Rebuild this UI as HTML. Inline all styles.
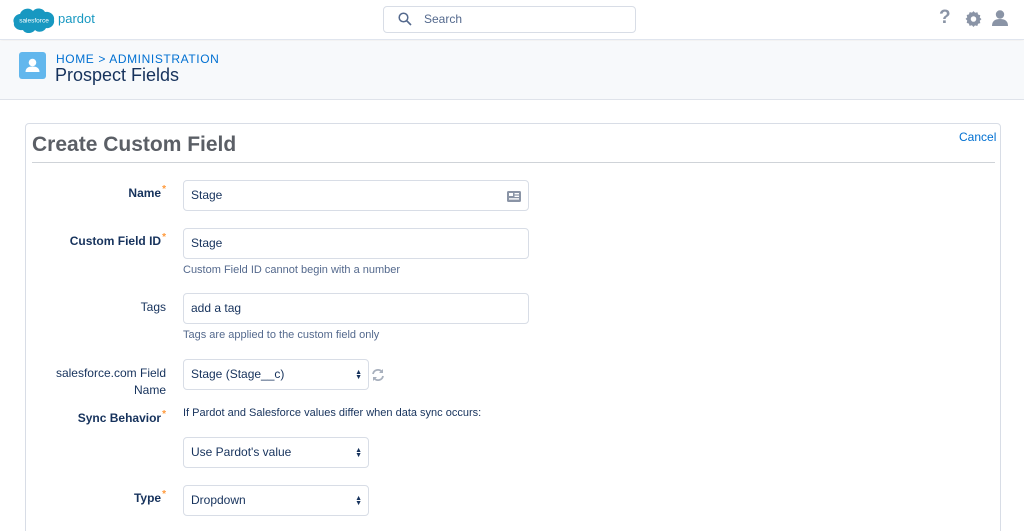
<!DOCTYPE html>
<html style="width:1024px;height:531px;overflow:hidden"><head><meta charset="utf-8"><style>
*{box-sizing:border-box;margin:0;padding:0}
body{width:1024px;height:531px;overflow:hidden;background:#fff;font-family:"Liberation Sans",sans-serif;color:#16325c;position:relative}
.a{position:absolute}
.top{left:0;top:0;width:1024px;height:40px;background:#fff;border-bottom:1px solid #e0e5ee;box-shadow:0 2px 3px rgba(0,0,0,.06)}
.ph{left:0;top:41px;width:1024px;height:59px;background:#f7f9fb;border-bottom:1px solid #dfe3ea}
.card{left:25px;top:123px;width:976px;height:420px;border:1px solid #d8dde6;border-radius:4px;background:#fff}
.lbl{font-size:12px;text-align:right;width:160px;left:6px;color:#16325c}
.b{font-weight:bold}
.st{color:#ff9a3c;font-size:10px;position:relative;top:-5px;margin-left:1px}
.in{left:183px;height:31px;border:1px solid #d8dde6;border-radius:4px;font-size:12px;padding:0 7px;line-height:29px;color:#16325c}
.help{left:183px;font-size:11px;color:#54698d}
.arr{position:absolute;right:6px;top:10px;font-size:7px;line-height:5px;color:#16325c}
</style></head><body>
<div class="a top"></div>
<svg class="a" style="left:12px;top:5px" width="44" height="30" viewBox="0 0 44 30"><path d="M8 9c2-6 10-7 13-3 3-4 10-3 12 1 5-1 10 3 9 8 1 5-4 9-8 8-2 4-8 5-11 2-3 4-10 4-12 0-5 1-10-3-9-7-2-4 2-9 6-9z" fill="#1798c1"/><text x="22" y="17.5" font-size="6.5" fill="#fff" text-anchor="middle" font-family="Liberation Sans">salesforce</text></svg>
<div class="a" style="left:58px;top:11px;font-size:13px;color:#1798c1">pardot</div>
<div class="a" style="left:383px;top:6px;width:253px;height:27px;border:1px solid #d8dde6;border-radius:4px"></div>
<svg class="a" style="left:398px;top:12px" width="14" height="14" viewBox="0 0 14 14"><circle cx="5.5" cy="5.5" r="4.3" fill="none" stroke="#54698d" stroke-width="1.5"/><path d="M8.5 8.5l4.5 4.5" stroke="#54698d" stroke-width="1.6"/></svg>
<div class="a" style="left:424px;top:12px;font-size:12px;color:#54698d">Search</div>
<div class="a" style="left:939px;top:7px;font-size:19px;color:#8a94a6;font-weight:bold">?</div>
<svg class="a" style="left:965px;top:10px" width="17" height="17" viewBox="0 0 16 16"><path d="M8 1l1.5 1.6 2.2-.5.6 2.1 2.1.7-.5 2.2L15.5 8.6l-1.6 1.5.5 2.2-2.1.6-.7 2.1-2.2-.5L8 16l-1.5-1.6-2.2.5-.6-2.1-2.1-.7.5-2.2L.5 8.4l1.6-1.5-.5-2.2 2.1-.6.7-2.1 2.2.5z" fill="#8a94a6"/><circle cx="8" cy="8.5" r="2.6" fill="#fff"/></svg>
<svg class="a" style="left:991px;top:9px" width="18" height="18" viewBox="0 0 18 18"><circle cx="9" cy="5.5" r="4.2" fill="#8a94a6"/><path d="M1 17c0-5 3-7 8-7s8 2 8 7z" fill="#8a94a6"/></svg>
<div class="a ph"></div>
<div class="a" style="left:19px;top:52px;width:27px;height:27px;background:#62b7ed;border-radius:3px"></div>
<svg class="a" style="left:22px;top:55px" width="21" height="21" viewBox="0 0 21 21"><circle cx="10.5" cy="7.5" r="3.8" fill="#fff"/><path d="M3.5 17c0-4 3-5.5 7-5.5s7 1.5 7 5.5z" fill="#fff"/></svg>
<div class="a" style="left:56px;top:52px;font-size:12px;color:#0070d2;letter-spacing:.6px">HOME &gt; ADMINISTRATION</div>
<div class="a" style="left:55px;top:65px;font-size:18px;color:#16325c">Prospect Fields</div>
<div class="a card"></div>
<div class="a" style="left:32px;top:133px;font-size:21px;font-weight:bold;color:#5b5f66">Create Custom Field</div>
<div class="a" style="left:32px;top:162px;width:963px;height:1px;background:#cfd3d8"></div>
<div class="a" style="left:959px;top:130px;font-size:12px;color:#0070d2">Cancel</div>

<div class="a lbl b" style="top:186px">Name<span class="st">*</span></div>
<div class="a in" style="top:180px;width:346px">Stage<svg style="position:absolute;right:7px;top:10px" width="14" height="11" viewBox="0 0 14 11"><rect x="0" y="0" width="14" height="11" rx="1.5" fill="#8a94a6"/><rect x="2" y="2" width="4" height="3" fill="#fff"/><rect x="7.5" y="2" width="4.5" height="1.4" fill="#fff"/><rect x="7.5" y="4.6" width="4.5" height="1.4" fill="#fff"/><rect x="2" y="7.2" width="10" height="1.4" fill="#fff"/></svg></div>

<div class="a lbl b" style="top:234px">Custom Field ID<span class="st">*</span></div>
<div class="a in" style="top:228px;width:346px">Stage</div>
<div class="a help" style="top:264px">Custom Field ID cannot begin with a number</div>

<div class="a lbl" style="top:300px">Tags</div>
<div class="a in" style="top:293px;width:346px">add a tag</div>
<div class="a help" style="top:329px">Tags are applied to the custom field only</div>

<div class="a lbl" style="top:365px;line-height:17px">salesforce.com Field<br>Name</div>
<div class="a in" style="top:359px;width:186px">Stage (Stage__c)<div class="arr">▲<br>▼</div></div>
<svg class="a" style="left:371px;top:368px" width="14" height="14" viewBox="0 0 14 14"><path d="M2 6a5 5 0 0 1 9-2M12 8a5 5 0 0 1-9 2" fill="none" stroke="#a8b0bd" stroke-width="1.8"/><path d="M12 1v4H8zM2 13V9h4z" fill="#a8b0bd"/></svg>

<div class="a lbl b" style="top:411px">Sync Behavior<span class="st">*</span></div>
<div class="a" style="left:183px;top:407px;font-size:11px;color:#16325c">If Pardot and Salesforce values differ when data sync occurs:</div>
<div class="a in" style="top:437px;width:186px">Use Pardot's value<div class="arr">▲<br>▼</div></div>

<div class="a lbl b" style="top:491px">Type<span class="st">*</span></div>
<div class="a in" style="top:485px;width:186px">Dropdown<div class="arr">▲<br>▼</div></div>
</body></html>
